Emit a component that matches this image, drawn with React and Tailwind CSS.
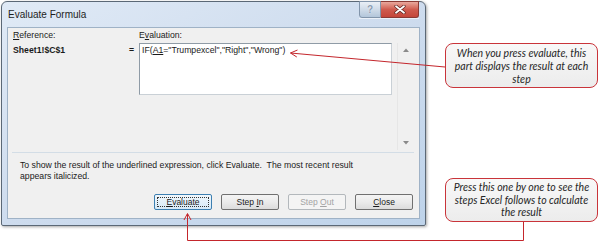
export default function App() {
  const dlg = "font-['Liberation_Sans',Arial,sans-serif]";
  const callout = "font-['Lato','Liberation_Sans',sans-serif] italic";
  const btn =
    "w-[58px] h-[16px] flex items-center justify-center rounded-[2px] border text-[8.5px] leading-none";
  return (
    <div className="relative w-[600px] h-[243px] bg-white overflow-hidden">
      {/* Dialog window */}
      <div
        className={`${dlg} ml-[1px] mt-[1px] w-[425px] h-[225px] border border-[#5b6876] rounded-t-[6px] rounded-b-[2px] flex flex-col bg-gradient-to-br from-[#e0eaf6] via-[#cedcee] to-[#bed3ea] shadow-[1px_1px_3px_rgba(0,0,0,0.35)]`}
      >
        {/* Title bar */}
        <div className="h-[25px] flex items-start shrink-0">
          <span className="ml-[6px] mt-[7px] text-[10px] leading-[12px] text-[#1e1e1e]">
            Evaluate Formula
          </span>
          <div className="flex-1" />
          <div className="flex mr-[6px] -mt-[1px] h-[17px] shadow-[0_1px_0_rgba(255,255,255,0.6)]">
            <div className="w-[22px] h-full rounded-bl-[3px] border border-[#8295ab] bg-gradient-to-b from-[#e9eff6] via-[#cfdbe8] to-[#b3c6da] flex items-center justify-center">
              <span className="text-[10px] font-bold leading-none text-[#8a9bb0] [text-shadow:0_0_1px_#fff]">
                ?
              </span>
            </div>
            <div className="w-[38px] h-full rounded-br-[3px] border border-l-0 border-[#8a3a34] bg-gradient-to-b from-[#e8a89d] via-[#cf5b4e] to-[#c4463a] flex items-center justify-center">
              <svg width="12" height="9" viewBox="0 0 12 9">
                <path d="M2 1.2 L10 7.8 M10 1.2 L2 7.8" stroke="#5a2520" strokeWidth="3.2" strokeLinecap="round" />
                <path d="M2 1.2 L10 7.8 M10 1.2 L2 7.8" stroke="#ffffff" strokeWidth="1.8" strokeLinecap="round" />
              </svg>
            </div>
          </div>
        </div>

        {/* Client area */}
        <div className="flex-1 pl-[5px] pr-[5px] pb-[6px] flex">
          <div className="flex-1 bg-[#f0f0f0] border border-[#9fb2c6] flex flex-col text-[#1a1a1a]">
            {/* Top section */}
            <div className="h-[122px] flex shrink-0">
              <div className="w-[117px] pl-[5px] pt-[2px]">
                <div className="text-[8.7px] leading-[11px]">
                  <span className="underline">R</span>eference:
                </div>
                <div className="mt-[4px] text-[8.7px] leading-[11px] font-bold">Sheet1!$C$1</div>
              </div>
              <div className="w-[14px] pt-[17px] pl-[4px] text-[8.7px] leading-[11px] font-bold">=</div>
              <div className="w-[253px] pt-[2px] flex flex-col">
                <div className="text-[8.7px] leading-[11px]">
                  E<span className="underline">v</span>aluation:
                </div>
                <div className="mt-[2px] h-[52px] bg-white border border-[#8f9ba6] border-b-[#c9d0d6] border-r-[#c9d0d6] px-[2px] pt-[1px] text-[8.7px] leading-[11px]">
                  IF(<span className="underline">A1</span>="Trumpexcel","Right","Wrong")
                </div>
              </div>
              <div className="ml-[5px] mt-[15px] w-[17px] h-[107px] bg-[#f0f0f0] border-l border-[#e6e6e6] flex flex-col items-center justify-between py-[5px]">
                <svg width="6" height="4" viewBox="0 0 6 4">
                  <path d="M0 4 L3 0.5 L6 4 Z" fill="#8a8a8a" />
                </svg>
                <svg width="6" height="4" viewBox="0 0 6 4">
                  <path d="M0 0 L3 3.5 L6 0 Z" fill="#8a8a8a" />
                </svg>
              </div>
            </div>

            {/* Separator */}
            <div className="ml-[4px] mr-[5px] mt-[2px] h-[1px] bg-[#d3dde6] shrink-0" />

            {/* Info text */}
            <div className="ml-[12px] mt-[7px] text-[8.7px] leading-[10.5px]">
              <div>To show the result of the underlined expression, click Evaluate.&nbsp; The most recent result</div>
              <div>appears italicized.</div>
            </div>

            {/* Buttons */}
            <div className="mt-[13px] mr-[6px] flex justify-end gap-[9px]">
              <div className={`${btn} border-[#3c7fb1] bg-gradient-to-b from-[#f0f7fc] to-[#d6e9f7] p-[2px]`}>
                <div className="w-full h-full flex items-center justify-center border border-dotted border-[#333]">
                  <span>
                    <span className="underline">E</span>valuate
                  </span>
                </div>
              </div>
              <div className={`${btn} border-[#707070] bg-gradient-to-b from-[#f4f4f4] via-[#ebebeb] to-[#dcdcdc]`}>
                <span>
                  Step <span className="underline">I</span>n
                </span>
              </div>
              <div className={`${btn} border-[#b3b8bc] bg-[#f4f4f4] text-[#a3a3a3]`}>
                <span>
                  Step <span className="underline">O</span>ut
                </span>
              </div>
              <div className={`${btn} border-[#707070] bg-gradient-to-b from-[#f4f4f4] via-[#ebebeb] to-[#dcdcdc]`}>
                <span>
                  <span className="underline">C</span>lose
                </span>
              </div>
            </div>
          </div>
        </div>
      </div>

      {/* Callout 1 */}
      <div
        className={`${callout} absolute left-[445px] top-[43px] w-[153px] h-[45px] rounded-[8px] border border-[#c9343a] bg-gradient-to-b from-[#f8f8f8] to-[#ececec] text-[#262626] text-[10.5px] leading-[13px] text-center pt-[3px] whitespace-nowrap`}
      >
        When you press evaluate, this
        <br />
        part displays the result at each
        <br />
        step
      </div>

      {/* Callout 2 */}
      <div
        className={`${callout} absolute left-[445px] top-[178px] w-[153px] h-[44px] rounded-[8px] border border-[#c9343a] bg-gradient-to-b from-[#f8f8f8] to-[#ececec] text-[#262626] text-[10.5px] leading-[12.5px] text-center pt-[2px] whitespace-nowrap`}
      >
        Press this one by one to see the
        <br />
        steps Excel follows to calculate
        <br />
        the result
      </div>

      {/* Connector arrows */}
      <svg className="absolute left-0 top-0 pointer-events-none" width="600" height="243" viewBox="0 0 600 243">
        <g stroke="#c4262c" strokeWidth="1" fill="none">
          <path d="M445 67 L290.5 53" />
          <path d="M297.5 50 L290.5 53 L296.8 57" />
          <path d="M523.5 222 L523.5 240.5 L187.5 240.5 L187.5 214" />
          <path d="M184 220 L187.5 213.5 L191 220" />
        </g>
      </svg>
    </div>
  );
}
